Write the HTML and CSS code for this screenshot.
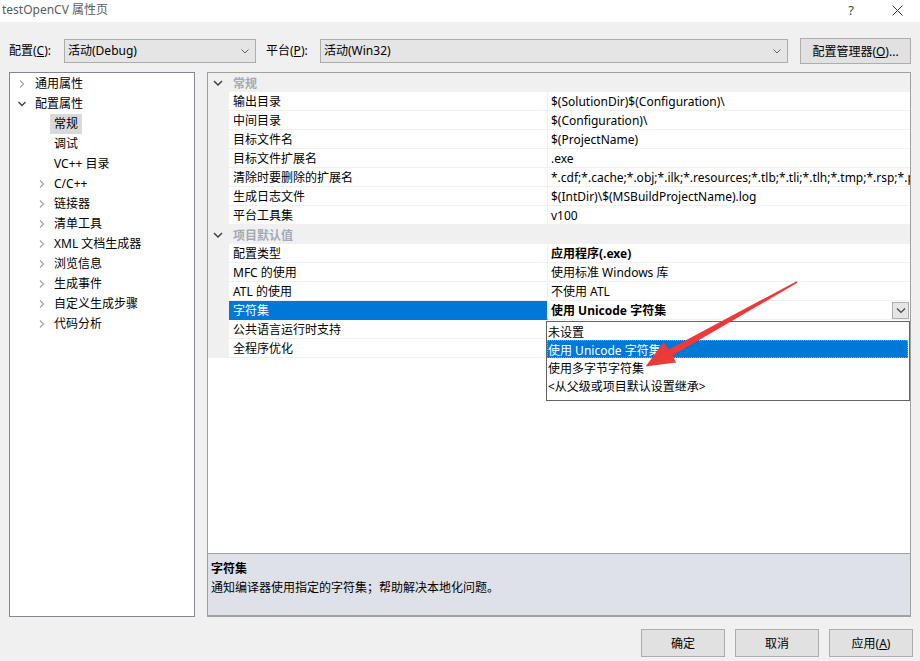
FILE: index.html
```html
<!DOCTYPE html>
<html>
<head>
<meta charset="utf-8">
<link rel="stylesheet" href="styles.css">
</head>
<body>
<div class="dialog">
  <div class="titlebar">
    <span class="title">testOpenCV 属性页</span>
    <span class="tb-help">?</span>
    <svg class="tb-close" width="11" height="11" viewBox="0 0 11 11"><path d="M0.5 0.5 L10.5 10.5 M10.5 0.5 L0.5 10.5" stroke="#333" stroke-width="1" fill="none"/></svg>
  </div>

  <div class="toolbar">
    <span class="lbl lbl-config">配置(<u>C</u>):</span>
    <div class="combo combo-config"><span class="combo-text">活动(Debug)</span><svg class="combo-chev" width="8" height="5" viewBox="0 0 8 5"><path d="M0.5 0.5 L4 4 L7.5 0.5" stroke="#606060" fill="none"/></svg></div>
    <span class="lbl lbl-platform">平台(<u>P</u>):</span>
    <div class="combo combo-platform"><span class="combo-text">活动(Win32)</span><svg class="combo-chev" width="8" height="5" viewBox="0 0 8 5"><path d="M0.5 0.5 L4 4 L7.5 0.5" stroke="#606060" fill="none"/></svg></div>
    <button class="btn btn-manager">配置管理器(<u>O</u>)...</button>
  </div>

  <div class="main">
    <div class="tree">
      <div class="trow l1"><svg class="chev" width="8" height="10" viewBox="0 0 8 10"><path d="M2 1.5 L5.5 5 L2 8.5" stroke="#a6a6a6" stroke-width="1.3" fill="none"/></svg><span class="tlabel">通用属性</span></div>
      <div class="trow l1"><svg class="chev" width="8" height="10" viewBox="0 0 8 10"><path d="M0.5 3 L4 6.5 L7.5 3" stroke="#404040" stroke-width="1.3" fill="none"/></svg><span class="tlabel">配置属性</span></div>
      <div class="trow leaf"><span class="tlabel sel">常规</span></div>
      <div class="trow leaf"><span class="tlabel">调试</span></div>
      <div class="trow leaf"><span class="tlabel">VC++ 目录</span></div>
      <div class="trow l2"><svg class="chev" width="8" height="10" viewBox="0 0 8 10"><path d="M2 1.5 L5.5 5 L2 8.5" stroke="#a6a6a6" stroke-width="1.3" fill="none"/></svg><span class="tlabel">C/C++</span></div>
      <div class="trow l2"><svg class="chev" width="8" height="10" viewBox="0 0 8 10"><path d="M2 1.5 L5.5 5 L2 8.5" stroke="#a6a6a6" stroke-width="1.3" fill="none"/></svg><span class="tlabel">链接器</span></div>
      <div class="trow l2"><svg class="chev" width="8" height="10" viewBox="0 0 8 10"><path d="M2 1.5 L5.5 5 L2 8.5" stroke="#a6a6a6" stroke-width="1.3" fill="none"/></svg><span class="tlabel">清单工具</span></div>
      <div class="trow l2"><svg class="chev" width="8" height="10" viewBox="0 0 8 10"><path d="M2 1.5 L5.5 5 L2 8.5" stroke="#a6a6a6" stroke-width="1.3" fill="none"/></svg><span class="tlabel">XML 文档生成器</span></div>
      <div class="trow l2"><svg class="chev" width="8" height="10" viewBox="0 0 8 10"><path d="M2 1.5 L5.5 5 L2 8.5" stroke="#a6a6a6" stroke-width="1.3" fill="none"/></svg><span class="tlabel">浏览信息</span></div>
      <div class="trow l2"><svg class="chev" width="8" height="10" viewBox="0 0 8 10"><path d="M2 1.5 L5.5 5 L2 8.5" stroke="#a6a6a6" stroke-width="1.3" fill="none"/></svg><span class="tlabel">生成事件</span></div>
      <div class="trow l2"><svg class="chev" width="8" height="10" viewBox="0 0 8 10"><path d="M2 1.5 L5.5 5 L2 8.5" stroke="#a6a6a6" stroke-width="1.3" fill="none"/></svg><span class="tlabel">自定义生成步骤</span></div>
      <div class="trow l2"><svg class="chev" width="8" height="10" viewBox="0 0 8 10"><path d="M2 1.5 L5.5 5 L2 8.5" stroke="#a6a6a6" stroke-width="1.3" fill="none"/></svg><span class="tlabel">代码分析</span></div>
    </div>

    <div class="right">
      <div class="grid">
        <div class="cat"><svg class="cat-chev" width="10" height="10" viewBox="0 0 10 10"><path d="M1 3 L5 7 L9 3" stroke="#404040" stroke-width="1.5" fill="none"/></svg><span class="cat-label">常规</span></div>
        <div class="prow"><span class="pmargin"></span><span class="pname">输出目录</span><span class="pval">$(SolutionDir)$(Configuration)\</span></div>
        <div class="prow"><span class="pmargin"></span><span class="pname">中间目录</span><span class="pval">$(Configuration)\</span></div>
        <div class="prow"><span class="pmargin"></span><span class="pname">目标文件名</span><span class="pval">$(ProjectName)</span></div>
        <div class="prow"><span class="pmargin"></span><span class="pname">目标文件扩展名</span><span class="pval">.exe</span></div>
        <div class="prow"><span class="pmargin"></span><span class="pname">清除时要删除的扩展名</span><span class="pval">*.cdf;*.cache;*.obj;*.ilk;*.resources;*.tlb;*.tli;*.tlh;*.tmp;*.rsp;*.pgc</span></div>
        <div class="prow"><span class="pmargin"></span><span class="pname">生成日志文件</span><span class="pval">$(IntDir)\$(MSBuildProjectName).log</span></div>
        <div class="prow"><span class="pmargin"></span><span class="pname">平台工具集</span><span class="pval">v100</span></div>
        <div class="cat"><svg class="cat-chev" width="10" height="10" viewBox="0 0 10 10"><path d="M1 3 L5 7 L9 3" stroke="#404040" stroke-width="1.5" fill="none"/></svg><span class="cat-label">项目默认值</span></div>
        <div class="prow"><span class="pmargin"></span><span class="pname">配置类型</span><span class="pval bold">应用程序(.exe)</span></div>
        <div class="prow"><span class="pmargin"></span><span class="pname">MFC 的使用</span><span class="pval">使用标准 Windows 库</span></div>
        <div class="prow"><span class="pmargin"></span><span class="pname">ATL 的使用</span><span class="pval">不使用 ATL</span></div>
        <div class="prow selected"><span class="pmargin"></span><span class="pname">字符集</span><span class="pval bold">使用 Unicode 字符集<span class="dropbtn"><svg width="10" height="6" viewBox="0 0 10 6"><path d="M1 0.5 L5 4.5 L9 0.5" stroke="#404040" stroke-width="1.1" fill="none"/></svg></span></span></div>
        <div class="prow"><span class="pmargin"></span><span class="pname">公共语言运行时支持</span><span class="pval"></span></div>
        <div class="prow"><span class="pmargin"></span><span class="pname">全程序优化</span><span class="pval"></span></div>

        <div class="droplist">
          <div class="ditem">未设置</div>
          <div class="ditem hl">使用 Unicode 字符集</div>
          <div class="ditem">使用多字节字符集</div>
          <div class="ditem">&lt;从父级或项目默认设置继承&gt;</div>
        </div>
      </div>
      <div class="desc">
        <div class="desc-title">字符集</div>
        <div class="desc-text">通知编译器使用指定的字符集；帮助解决本地化问题。</div>
      </div>
    </div>
  </div>

  <div class="footer">
    <button class="btn fbtn">确定</button>
    <button class="btn fbtn">取消</button>
    <button class="btn fbtn">应用(<u>A</u>)</button>
  </div>

  <svg class="arrow" width="920" height="661" viewBox="0 0 920 661">
    <polygon points="796.6,281.2 668.6,349.6 663.8,342.2 645.5,366.5 676.2,362.4 672.4,355.6 797.4,282.8" fill="#ec3a3a"/>
  </svg>
</div>
</body>
</html>
```

FILE: styles.css
```css
* { box-sizing: border-box; }
html, body { margin: 0; padding: 0; }
body {
  width: 920px;
  height: 661px;
  overflow: hidden;
  background: #f0f0f0;
  font-family: "Noto Sans", "Noto Sans CJK SC", sans-serif;
  font-size: 12px;
  color: #000;
}
u { text-decoration: underline; text-underline-offset: 1px; }
.dialog {
  position: relative;
  width: 920px;
  height: 661px;
  display: flex;
  flex-direction: column;
}

/* title bar */
.titlebar {
  height: 22px;
  flex: none;
  background: #fff;
  display: flex;
  align-items: center;
  padding-left: 2px;
}
.title { flex: 1; color: #5c5c5c; font-size: 12px; line-height: 16px; margin-top: -2px; }
.tb-help { width: 12px; text-align: center; color: #444; font-size: 13px; margin-right: 35px; margin-top: -2px; }
.tb-close { margin-right: 17px; margin-top: -2px; }

/* toolbar */
.toolbar {
  height: 50px;
  flex: none;
  display: flex;
  align-items: center;
  padding: 8px 9px 0 9px;
}
.lbl { line-height: 16px; white-space: nowrap; }
.lbl-config { width: 55px; }
.lbl-platform { width: 54px; margin-left: 10px; }
.combo {
  height: 24px;
  border: 1px solid #acacac;
  background: #e5e5e5;
  display: flex;
  align-items: center;
  padding: 0 6px 0 3px;
}
.combo-text { flex: 1; line-height: 16px; }
.combo-config { width: 192px; }
.combo-platform { width: 468px; }
.btn {
  font-family: inherit;
  font-size: 12px;
  color: #000;
  background: #e1e1e1;
  border: 1px solid #adadad;
  padding: 0;
  margin: 0;
}
.btn-manager { width: 111px; height: 26px; margin-left: 12px; }

/* main */
.main {
  height: 545px;
  flex: none;
  display: flex;
  gap: 12px;
  padding: 0 9px;
}
.tree {
  width: 186px;
  border: 1px solid #828790;
  background: #fff;
}
.trow {
  height: 20px;
  display: flex;
  align-items: center;
  white-space: nowrap;
  padding-top: 2px;
}
.trow .chev { flex: none; }
.l1 { padding-left: 8px; }
.l1 .chev { margin-right: 9px; }
.l2 { padding-left: 28px; }
.l2 .chev { margin-right: 8px; }
.leaf { padding-left: 40px; }
.tlabel { line-height: 20px; padding: 0 4px 0 0; }
.leaf .tlabel { padding: 0 4px; }
.tlabel.sel { background: #d9d9d9; }

.right {
  width: 704px;
  display: flex;
  flex-direction: column;
}
.grid {
  height: 482px;
  flex: none;
  border: 1px solid #a0a0a0;
  background: #fff;
  position: relative;
  overflow: hidden;
}
.cat {
  height: 19px;
  background: #f0f0f0;
  display: flex;
  align-items: center;
  padding-left: 5px;
}
.cat-chev { flex: none; margin-right: 10px; }
.cat-label { color: #a3aab4; font-weight: bold; line-height: 19px; padding-top: 2px; }
.prow {
  height: 19px;
  display: flex;
  white-space: nowrap;
}
.pmargin { width: 21px; flex: none; background: #f0f0f0; }
.pname {
  width: 319px;
  flex: none;
  padding-left: 4px;
  line-height: 20px;
  border-bottom: 1px solid #f0f0f0;
  border-right: 1px solid #f0f0f0;
  overflow: hidden;
}
.pval {
  flex: 1;
  min-width: 0;
  padding-left: 3px;
  line-height: 20px;
  border-bottom: 1px solid #f0f0f0;
  overflow: hidden;
  position: relative;
}
.bold { font-weight: bold; }
.selected .pname {
  background: #0078d7;
  color: #fff;
  border-bottom-color: #0078d7;
}
.dropbtn {
  position: absolute;
  right: 1px;
  top: 1px;
  width: 17px;
  height: 17px;
  border: 1px solid #adadad;
  background: #e5e5e5;
  display: flex;
  align-items: center;
  justify-content: center;
}
.droplist {
  position: absolute;
  left: 338px;
  top: 248px;
  width: 364px;
  height: 80px;
  background: #fff;
  border: 1px solid #646464;
}
.ditem {
  height: 18px;
  line-height: 21px;
  padding-left: 1px;
  white-space: nowrap;
  overflow: hidden;
}
.ditem.hl {
  background: #0078d7;
  color: #fff;
  margin-right: 1px;
  outline: 1px dotted #e0902c;
  outline-offset: -1px;
}

.desc {
  height: 63px;
  flex: none;
  background: #dfe1e8;
  border: 1px solid #a0a0a0;
  border-top: none;
  border-bottom: 2px solid #a0a0a0;
  padding: 5px 3px 0 3px;
}
.desc-title { font-weight: bold; line-height: 19px; }
.desc-text { line-height: 20px; }

.footer {
  height: 44px;
  flex: none;
  display: flex;
  justify-content: flex-end;
  align-items: flex-start;
  gap: 10px;
  padding: 12px 7px 0 0;
}
.fbtn { width: 84px; height: 28px; }

.arrow {
  position: absolute;
  left: 0;
  top: 0;
  pointer-events: none;
}
```
